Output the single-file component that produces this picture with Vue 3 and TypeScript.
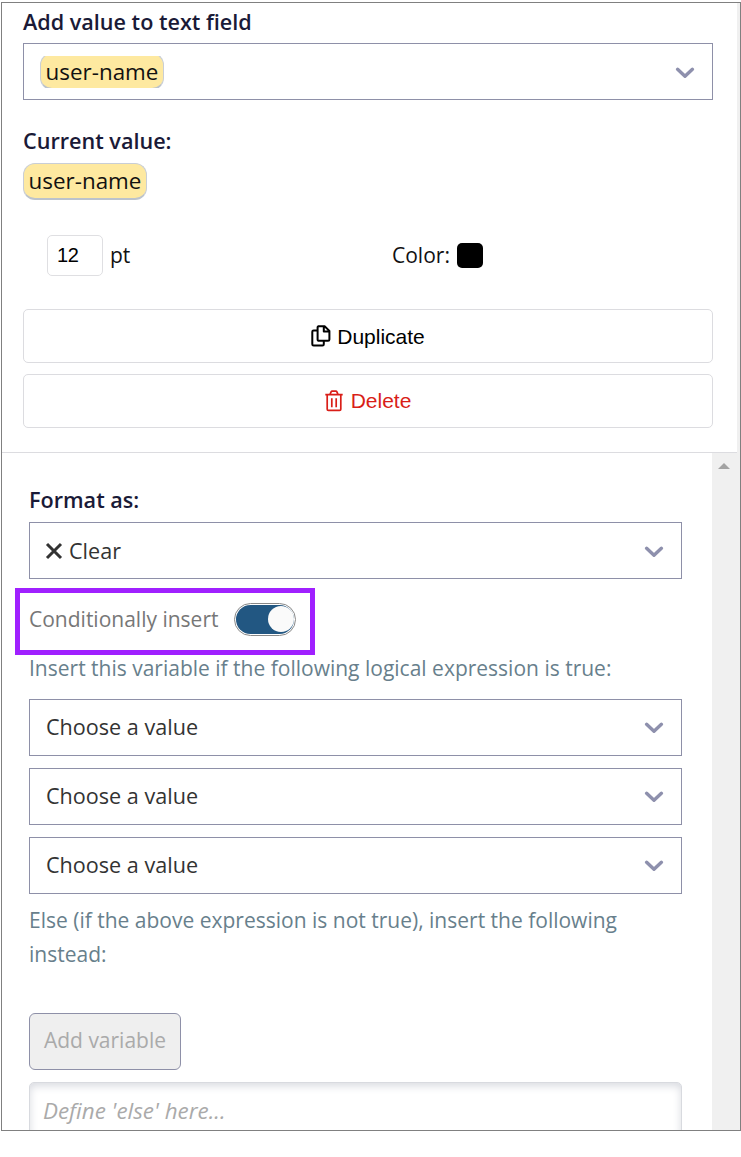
<script setup lang="ts">
import { ref } from 'vue'

const fontSize = ref('12')
const enabled = ref(true)
const operands: string[] = ['Choose a value', 'Choose a value', 'Choose a value']
</script>

<template>
  <div class="page">
    <main class="panel">
      <section class="field">
        <h2 class="label title">Add value to text field</h2>
        <div class="select wide">
          <span class="clip"><span class="chip">user-name</span></span>
          <svg class="chevron" viewBox="0 0 20 12"><path d="M2.6 2.3 10 9.3 17.4 2.3" /></svg>
        </div>
        <h2 class="label current">Current value:</h2>
        <div class="value"><span class="chip">user-name</span></div>
        <div class="style-row">
          <div class="size">
            <input v-model="fontSize" class="size-input" aria-label="Font size" />
            <span class="pt">pt</span>
          </div>
          <div class="color"><span class="color-name">Color:</span><span class="swatch"></span></div>
        </div>
        <button class="action">
          <svg class="copy" viewBox="0 0 20 22">
            <path d="M7.4 1.2h6.2l4.8 4.7v8.6a1.3 1.3 0 0 1-1.3 1.3H7.9a1.3 1.3 0 0 1-1.3-1.3V2.5a1.3 1.3 0 0 1 1.3-1.3ZM12.8 1.5v5.1h5.3M6.3 5.4H2.6a1.3 1.3 0 0 0-1.3 1.3v12.6a1.3 1.3 0 0 0 1.3 1.3h8.9a1.3 1.3 0 0 0 1.3-1.3v-3.2" />
          </svg>
          <span class="duplicate-text">Duplicate</span>
        </button>
        <button class="action delete">
          <svg class="trash" viewBox="0 0 18 22">
            <path d="M.3 4.6h17.4M5 4.4l1.1-2.5q.3-.7 1-.7h3.8q.7 0 1 .7L13 4.4M2.2 4.8v14.4q0 1.2 1.2 1.2h11.2q1.2 0 1.2-1.2V4.8M6.8 8.2v9M11.2 8.2v9" />
          </svg>
          <span class="delete-text">Delete</span>
        </button>
      </section>

      <div class="lower">
        <section class="options">
          <h2 class="label format">Format as:</h2>
          <div class="select">
            <svg class="cross" viewBox="0 0 18 18"><path d="m2 2 14 14M16 2 2 16" /></svg>
            <span class="select-text clear">Clear</span>
            <svg class="chevron" viewBox="0 0 20 12"><path d="M2.6 2.3 10 9.3 17.4 2.3" /></svg>
          </div>
          <div class="condition">
            <span class="condition-text">Conditionally insert</span>
            <button class="toggle" role="switch" :aria-checked="enabled" @click="enabled = !enabled">
              <span class="track" :class="{ on: enabled }"><span class="knob"></span></span>
            </button>
          </div>
          <p class="hint insert">Insert this variable if the following logical expression is true:</p>
          <div class="operands">
            <div v-for="(item, i) in operands" :key="i" class="select operand">
              <span class="select-text">{{ item }}</span>
              <svg class="chevron" viewBox="0 0 20 12"><path d="M2.6 2.3 10 9.3 17.4 2.3" /></svg>
            </div>
          </div>
          <p class="hint else">Else (if the above expression is not true), insert the following<br />instead:</p>
          <button class="add" disabled>Add variable</button>
          <div class="editor"><span class="placeholder">Define 'else' here...</span></div>
        </section>
        <div class="scrollbar"><svg class="arrow" viewBox="0 0 12 6"><path d="M0 6 6 0 12 6Z" /></svg></div>
      </div>
    </main>
  </div>
</template>

<style>
body {
  background: #fff;
}
</style>

<style scoped>
* {
  box-sizing: border-box;
}
.page {
  height: 1157px;
  padding: 2px 0 0 1px;
  overflow: hidden;
  font: 21px/30px 'Open Sans', 'Noto Sans', sans-serif;
  color: #111;
}
.panel {
  width: 740px;
  height: 1129px;
  border: 1px solid #808080;
  overflow: hidden;
  display: flex;
  flex-direction: column;
  background: #f0f0f0;
}
.field {
  width: 735px;
  height: 450px;
  flex: none;
  padding: 4px 24px 0 21px;
  background: #fff;
  border-bottom: 1px solid #dcdce0;
}
.label {
  margin: 0;
  font-size: 21.6px;
  line-height: 30px;
  font-weight: 600;
  color: #1a1a37;
  white-space: nowrap;
}
.title {
  margin-bottom: 6px;
}
.select {
  display: flex;
  align-items: center;
  height: 57px;
  border: 1px solid #8e90a8;
  background: #fff;
  padding: 0 17px 0 16px;
}
.clip {
  height: 32px;
  overflow: hidden;
  display: flex;
  align-items: center;
}
.chip {
  display: block;
  width: 124px;
  height: 37px;
  flex: none;
  border: 1px solid #c9ced6;
  border-bottom: 2px solid #bcc3cc;
  border-radius: 12px;
  background: #fee9a0;
  color: #111;
  text-align: center;
  font-size: 22.4px;
  line-height: 33px;
}
.clip .chip {
  line-height: 36px;
}
.chevron {
  width: 20px;
  height: 12px;
  margin-left: auto;
  margin-top: 3px;
  fill: none;
  stroke: #8e90ad;
  stroke-width: 3.4;
  stroke-linecap: round;
  stroke-linejoin: round;
}
.operand .chevron {
  margin-top: 1px;
}
.current {
  margin-top: 26px;
  margin-bottom: 7px;
}
.style-row {
  display: grid;
  grid-template-columns: 345px 1fr;
  margin: 35px 0 33px;
  padding-left: 24px;
  height: 41px;
}
.size,
.color {
  display: flex;
  align-items: center;
}
.size-input {
  width: 56px;
  height: 41px;
  border: 1px solid #dfdfe2;
  border-radius: 5px;
  padding: 0 9px;
  font: 20px 'Liberation Sans', Arial, sans-serif;
  letter-spacing: -0.4px;
  color: #000;
  outline: none;
}
.pt,
.color-name {
  padding-bottom: 1px;
}
.pt {
  margin-left: 7px;
}
.swatch {
  width: 26px;
  height: 25px;
  margin-left: 7px;
  border-radius: 5px;
  background: #000;
}
.action {
  display: flex;
  align-items: center;
  justify-content: center;
  width: 690px;
  height: 54px;
  margin-bottom: 11px;
  padding: 0;
  border: 1px solid #dcdce0;
  border-radius: 5px;
  background: #fff;
  font: 21px 'Liberation Sans', Arial, sans-serif;
  color: #000;
}
.duplicate-text {
  padding-top: 2px;
}
.delete {
  color: #d91e18;
}
.copy,
.trash {
  flex: none;
  height: 22px;
  fill: none;
  stroke: currentColor;
  stroke-linejoin: round;
}
.copy {
  width: 20px;
  margin-right: 6px;
  stroke-width: 2;
}
.trash {
  width: 18px;
  margin-right: 8px;
  stroke-width: 1.7;
}
.lower {
  display: flex;
  flex: 1;
  min-height: 0;
}
.options {
  width: 710px;
  padding: 32px 30px 0 27px;
  background: #fff;
  overflow: hidden;
}
.format {
  margin-bottom: 7px;
}
.cross {
  width: 18px;
  height: 18px;
  margin-left: -1px;
  fill: none;
  stroke: #333;
  stroke-width: 3;
}
.select-text {
  padding-bottom: 2px;
  font-size: 21.6px;
  color: #333;
}
.clear {
  margin-left: 6px;
  padding-bottom: 0;
}
.condition {
  display: flex;
  align-items: center;
  width: 300px;
  height: 67px;
  margin: 9px 0 0 -14px;
  padding-left: 9px;
  border: 5px solid #a020ff;
}
.condition-text {
  width: 205px;
  padding-bottom: 5px;
  color: #777;
}
.toggle {
  width: 62px;
  height: 33px;
  margin-top: -4px;
  padding: 1px;
  border: 1px solid #888;
  border-radius: 17px;
  background: #fff;
}
.track {
  display: flex;
  align-items: center;
  height: 29px;
  padding: 0 0 1px 1px;
  border-radius: 15px;
  background: #999;
}
.track.on {
  justify-content: flex-end;
  background: #225782;
}
.knob {
  width: 26px;
  height: 26px;
  margin-right: 0.5px;
  border-radius: 50%;
  background: #fafafa;
}
.hint {
  margin: 0;
  color: #687f8c;
  line-height: 34px;
  white-space: nowrap;
}
.insert {
  margin: -4px 0 14px;
}
.operands {
  display: grid;
  gap: 12px;
}
.else {
  margin: 9px 0 42px;
}
.add {
  display: block;
  width: 152px;
  height: 57px;
  padding: 0 0 4px;
  border: 1px solid #8e90a8;
  border-radius: 6px;
  background: #efefef;
  color: #aaa;
  font: inherit;
}
.editor {
  height: 90px;
  margin-top: 12px;
  padding: 13px;
  border: 1px solid #d8dadf;
  border-radius: 5px;
  box-shadow: inset 0 3px 8px #d8dae0;
}
.placeholder {
  color: #aaa;
  font-size: 22.4px;
  font-style: italic;
}
.scrollbar {
  flex: 1;
  padding: 10px 0 0 6px;
}
.arrow {
  display: block;
  width: 12px;
  height: 6px;
  fill: #a3a3a3;
}
</style>
